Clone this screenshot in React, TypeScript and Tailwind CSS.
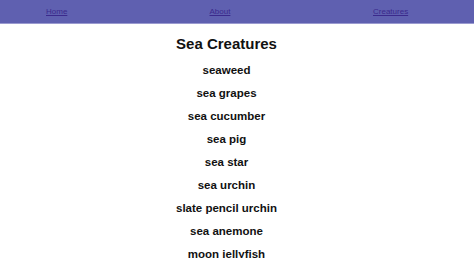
const creatures = [
  'seaweed',
  'sea grapes',
  'sea cucumber',
  'sea pig',
  'sea star',
  'sea urchin',
  'slate pencil urchin',
  'sea anemone',
  'moon jellyfish',
];

const links = ['Home', 'About', 'Creatures'];

export default function App() {
  return (
    <div className="h-[258px] overflow-hidden bg-white" style={{ fontFamily: '"Liberation Sans", Arial, sans-serif' }}>
      <nav className="flex h-[24px] items-center border-b border-[#9a9ad0] bg-[#5f60b0] pl-[46px]">
        {links.map(l => (
          <a key={l} href="#" className="w-[163.5px] shrink-0 text-[8px] text-[#3b2a8c] underline">
            {l}
          </a>
        ))}
      </nav>
      <div className="flex flex-col items-center pr-[21px] text-[#111]">
        <h1 className="mt-[11px] text-[15px] font-bold leading-[18px]">Sea Creatures</h1>
        <ul className="mt-[10px] flex flex-col items-center gap-[9px]">
          {creatures.map(c => (
            <li key={c} className="text-[11.5px] font-bold leading-[14px]">{c}</li>
          ))}
        </ul>
      </div>
    </div>
  );
}
